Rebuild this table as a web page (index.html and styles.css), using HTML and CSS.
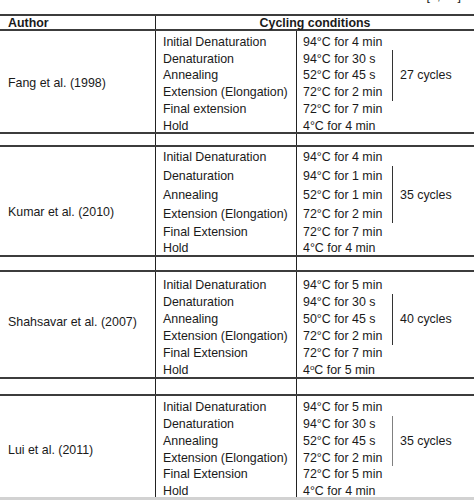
FILE: index.html
```html
<!DOCTYPE html>
<html lang="en">
<head>
<meta charset="utf-8">
<title>Cycling conditions</title>
<link rel="stylesheet" href="styles.css">
</head>
<body>
<div class="caption"><span class="caption-text">[3, 12]</span></div>
<div class="table">
  <div class="head">
    <div class="h-author">Author</div>
    <div class="h-cond">Cycling conditions</div>
  </div>

  <div class="group g1">
    <div class="author">Fang et al. (1998)</div>
    <div class="steps">
      <div>Initial Denaturation</div>
      <div>Denaturation</div>
      <div>Annealing</div>
      <div>Extension (Elongation)</div>
      <div>Final extension</div>
      <div>Hold</div>
    </div>
    <div class="conds">
      <div class="v r1">94°C for 4 min</div>
      <div class="v r2">94°C for 30 s</div>
      <div class="v r3">52°C for 45 s</div>
      <div class="v r4">72°C for 2 min</div>
      <div class="v r5">72°C for 7 min</div>
      <div class="v r6">4°C for 4 min</div>
      <div class="cycles">27 cycles</div>
    </div>
  </div>
  <div class="gap gap1"><div class="gc1"></div><div class="gc2"></div></div>

  <div class="group g2">
    <div class="author">Kumar et al. (2010)</div>
    <div class="steps">
      <div>Initial Denaturation</div>
      <div>Denaturation</div>
      <div>Annealing</div>
      <div>Extension (Elongation)</div>
      <div>Final Extension</div>
      <div>Hold</div>
    </div>
    <div class="conds">
      <div class="v r1">94°C for 4 min</div>
      <div class="v r2">94°C for 1 min</div>
      <div class="v r3">52°C for 1 min</div>
      <div class="v r4">72°C for 2 min</div>
      <div class="v r5">72°C for 7 min</div>
      <div class="v r6">4°C for 4 min</div>
      <div class="cycles">35 cycles</div>
    </div>
  </div>
  <div class="gap gap2"><div class="gc1"></div><div class="gc2"></div></div>

  <div class="group g3">
    <div class="author">Shahsavar et al. (2007)</div>
    <div class="steps">
      <div>Initial Denaturation</div>
      <div>Denaturation</div>
      <div>Annealing</div>
      <div>Extension (Elongation)</div>
      <div>Final Extension</div>
      <div>Hold</div>
    </div>
    <div class="conds">
      <div class="v r1">94°C for 5 min</div>
      <div class="v r2">94°C for 30 s</div>
      <div class="v r3">50°C for 45 s</div>
      <div class="v r4">72°C for 2 min</div>
      <div class="v r5">72°C for 7 min</div>
      <div class="v r6">4<sup class="deg">o</sup>C for 5 min</div>
      <div class="cycles">40 cycles</div>
    </div>
  </div>
  <div class="gap gap3"><div class="gc1"></div><div class="gc2"></div></div>

  <div class="group g4">
    <div class="author">Lui et al. (2011)</div>
    <div class="steps">
      <div>Initial Denaturation</div>
      <div>Denaturation</div>
      <div>Annealing</div>
      <div>Extension (Elongation)</div>
      <div>Final Extension</div>
      <div>Hold</div>
    </div>
    <div class="conds">
      <div class="v r1">94°C for 5 min</div>
      <div class="v r2">94°C for 30 s</div>
      <div class="v r3">52°C for 45 s</div>
      <div class="v r4">72°C for 2 min</div>
      <div class="v r5">72°C for 5 min</div>
      <div class="v r6">4°C for 4 min</div>
      <div class="cycles light">35 cycles</div>
    </div>
  </div>
</div>
</body>
</html>
```

FILE: styles.css
```css
html, body {
  margin: 0;
  padding: 0;
  background: #ffffff;
}

body {
  font-family: "Liberation Sans", Arial, Helvetica, sans-serif;
  font-size: 12.4px;
  color: #1a1a1a;
  width: 474px;
  height: 500px;
  overflow: hidden;
}

.caption {
  height: 14px;
  overflow: hidden;
  text-align: right;
  padding-right: 13px;
}

.caption-text {
  display: block;
  line-height: 14px;
  margin-top: -11.5px;
}

.table {
  border-top: 2px solid #3c3c3c;
}

.head {
  display: flex;
  height: 13px;
  line-height: 14px;
  font-weight: bold;
  border-bottom: 2px solid #3c3c3c;
}

.h-author {
  width: 156px;
  flex: none;
  box-sizing: border-box;
  padding-left: 8px;
  border-right: 1px solid #222;
}

.h-cond {
  flex: 1;
  text-align: center;
}

.group {
  display: flex;
  border-bottom: 2px solid #3c3c3c;
}

.author {
  width: 156px;
  flex: none;
  box-sizing: border-box;
  padding-left: 8px;
  border-right: 1px solid #222;
  display: flex;
  align-items: center;
}

.steps {
  width: 141px;
  flex: none;
  box-sizing: border-box;
  padding-left: 7px;
  border-right: 1px solid #222;
  display: grid;
  align-content: start;
  align-items: center;
  white-space: nowrap;
}

.conds {
  flex: 1;
  padding-left: 6px;
  display: grid;
  grid-template-columns: 89px 1fr;
  align-content: start;
  align-items: center;
  white-space: nowrap;
}

.v { grid-column: 1; }
.r1 { grid-row: 1; }
.r2 { grid-row: 2; }
.r3 { grid-row: 3; }
.r4 { grid-row: 4; }
.r5 { grid-row: 5; }
.r6 { grid-row: 6; }

.cycles {
  grid-column: 2;
  grid-row: 2 / 5;
  align-self: stretch;
  display: flex;
  align-items: center;
  padding-left: 7px;
  border-left: 1px solid #333;
}

.cycles.light {
  border-left-color: #808080;
}

.deg {
  font-size: 8px;
  line-height: 0;
  vertical-align: 4px;
}

/* group geometry */
.g1 { height: 101px; }
.g1 .author { padding-top: 3.6px; }
.g1 .steps, .g1 .conds {
  padding-top: 2.3px;
  grid-template-rows: repeat(6, 16.86px);
}

.g2 { height: 108px; }
.g2 .author { padding-top: 21px; }
.g2 .steps, .g2 .conds {
  padding-top: 1.8px;
  grid-template-rows: 17.4px 18.8px 20px 18.3px 16.7px 16.6px;
}

.g3 { height: 105px; }
.g3 .author { padding-bottom: 5.6px; }
.g3 .steps, .g3 .conds {
  padding-top: 4.5px;
  grid-template-rows: repeat(6, 17px);
}

.g4 {
  height: 101px;
  border-bottom: 3px solid #d2d2d2;
}
.g4 .author { padding-top: 7px; }
.g4 .steps, .g4 .conds {
  padding-top: 2.9px;
  grid-template-rows: repeat(6, 16.75px);
}

.gap {
  display: flex;
  border-bottom: 2px solid #3c3c3c;
}
.gap1 { height: 11px; }
.gap2 { height: 13px; }
.gap3 { height: 15px; }

.gc1 {
  width: 156px;
  flex: none;
  box-sizing: border-box;
  border-right: 1px solid #222;
}

.gc2 {
  width: 141px;
  flex: none;
  box-sizing: border-box;
  border-right: 1px solid #222;
}
```
